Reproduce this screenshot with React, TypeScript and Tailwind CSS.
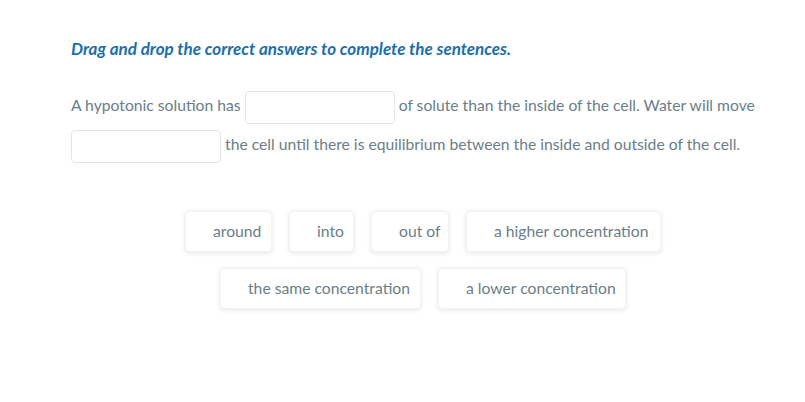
import React from "react";

const Blank = ({ w }: { w: string }) => (
  <span
    className={`inline-block ${w} h-[33px] align-middle rounded-[4px] border border-[#e3e6e8] bg-white`}
  />
);

const Chip = ({ label, w }: { label: string; w: string }) => (
  <div
    className={`${w} h-[41px] flex items-center pl-[27px] rounded-[4px] border border-[#f0f2f3] bg-white shadow-[0_1px_5px_rgba(0,0,0,0.11)] text-[15.7px] text-[#6a7e87] whitespace-nowrap`}
  >
    {label}
  </div>
);

export default function App() {
  return (
    <div
      className="w-[805px] h-[402px] bg-white overflow-hidden"
      style={{ fontFamily: "Lato, 'Open Sans', sans-serif" }}
    >
      <div className="w-[704px] ml-[71px] pt-[38px]">
        <h1 className="text-[17px] leading-[21px] font-bold italic text-[#1b70a8]">
          Drag and drop the correct answers to complete the sentences.
        </h1>
        <p className="mt-[27px] text-[15.7px] leading-[39px] text-[#6a7e87]">
          A hypotonic solution has <Blank w="w-[150px]" /> of solute than the inside of the cell. Water will move{" "}
          <Blank w="w-[150px]" /> the cell until there is equilibrium between the inside and outside of the cell.
        </p>
        <div className="mt-[47px] flex flex-col items-center gap-[16px]">
          <div className="flex gap-[17px]">
            <Chip label="around" w="w-[87px]" />
            <Chip label="into" w="w-[65px]" />
            <Chip label="out of" w="w-[78px]" />
            <Chip label="a higher concentration" w="w-[195px]" />
          </div>
          <div className="flex gap-[17px]">
            <Chip label="the same concentration" w="w-[201px]" />
            <Chip label="a lower concentration" w="w-[188px]" />
          </div>
        </div>
      </div>
    </div>
  );
}
